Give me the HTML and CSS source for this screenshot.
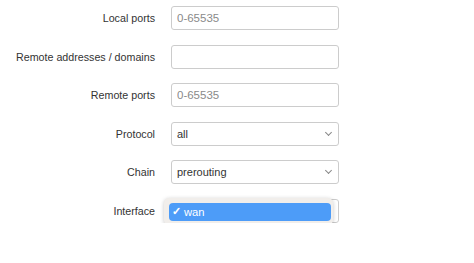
FILE: index.html
```html
<!DOCTYPE html>
<html>
<head>
    <title>Rule</title>
    <link rel="stylesheet" href="styles.css">
</head>
<body>
    <div class="form">
        <div class="row">
            <label class="label">Local ports</label>
            <div class="field"><input class="input" type="text" placeholder="0-65535"></div>
        </div>
        <div class="row">
            <label class="label">Remote addresses / domains</label>
            <div class="field"><input class="input" type="text"></div>
        </div>
        <div class="row">
            <label class="label">Remote ports</label>
            <div class="field"><input class="input" type="text" placeholder="0-65535"></div>
        </div>
        <div class="row">
            <label class="label">Protocol</label>
            <div class="field select"><span>all</span><i class="chev"></i></div>
        </div>
        <div class="row">
            <label class="label">Chain</label>
            <div class="field select"><span>prerouting</span><i class="chev"></i></div>
        </div>
        <div class="row">
            <label class="label">Interface</label>
            <div class="field select"><span></span><i class="chev"></i>
                <!-- open dropdown -->
                <div class="menu">
                    <div class="option selected"><span class="tick">✓</span>wan</div>
                </div>
            </div>
        </div>
    </div>
</body>
</html>
```

FILE: styles.css
```css
body {
    font-family: "Liberation Sans", Arial, sans-serif;
    background-color: #fff;
    margin: 0;
    padding: 0;
    color: #333;
}

.form {
    display: flex;
    flex-direction: column;
    gap: 14.6px;
    padding-top: 6px;
}

.row {
    display: flex;
    align-items: center;
    gap: 16px;
}

.label {
    width: 155px;
    text-align: right;
    font-size: 10.7px;
    color: #333;
}

.field {
    position: relative;
    width: 168px;
    height: 24px;
}

.input {
    width: 100%;
    height: 100%;
    box-sizing: border-box;
    border: 1px solid #ccc;
    border-radius: 3px;
    padding: 0 5px;
    font-family: inherit;
    font-size: 11.5px;
    color: #333;
    outline: none;
}

.input::placeholder {
    color: #8a8a8a;
}

.select {
    box-sizing: border-box;
    border: 1px solid #ccc;
    border-radius: 3px;
    display: flex;
    align-items: center;
    justify-content: space-between;
    padding: 0 7px 0 5px;
    font-size: 11px;
    color: #333;
}

.chev {
    width: 4px;
    height: 4px;
    border-right: 1px solid #888;
    border-bottom: 1px solid #888;
    transform: rotate(45deg);
    margin-top: -3px;
}

.menu {
    position: absolute;
    left: -8px;
    top: -2px;
    width: 169px;
    box-sizing: border-box;
    padding: 5px 2px 4px 5px;
    background: #f1eeeb;
    border-radius: 5px;
    box-shadow: 0 1px 4px rgba(0, 0, 0, 0.22);
}

.option {
    height: 18px;
    display: flex;
    align-items: center;
    padding-left: 3px;
    font-size: 11.2px;
    border-radius: 4px;
}

.option.selected {
    background: #4d9cf8;
    color: #fff;
}

.tick {
    margin-right: 3px;
    font-size: 11px;
    font-weight: bold;
}
```
